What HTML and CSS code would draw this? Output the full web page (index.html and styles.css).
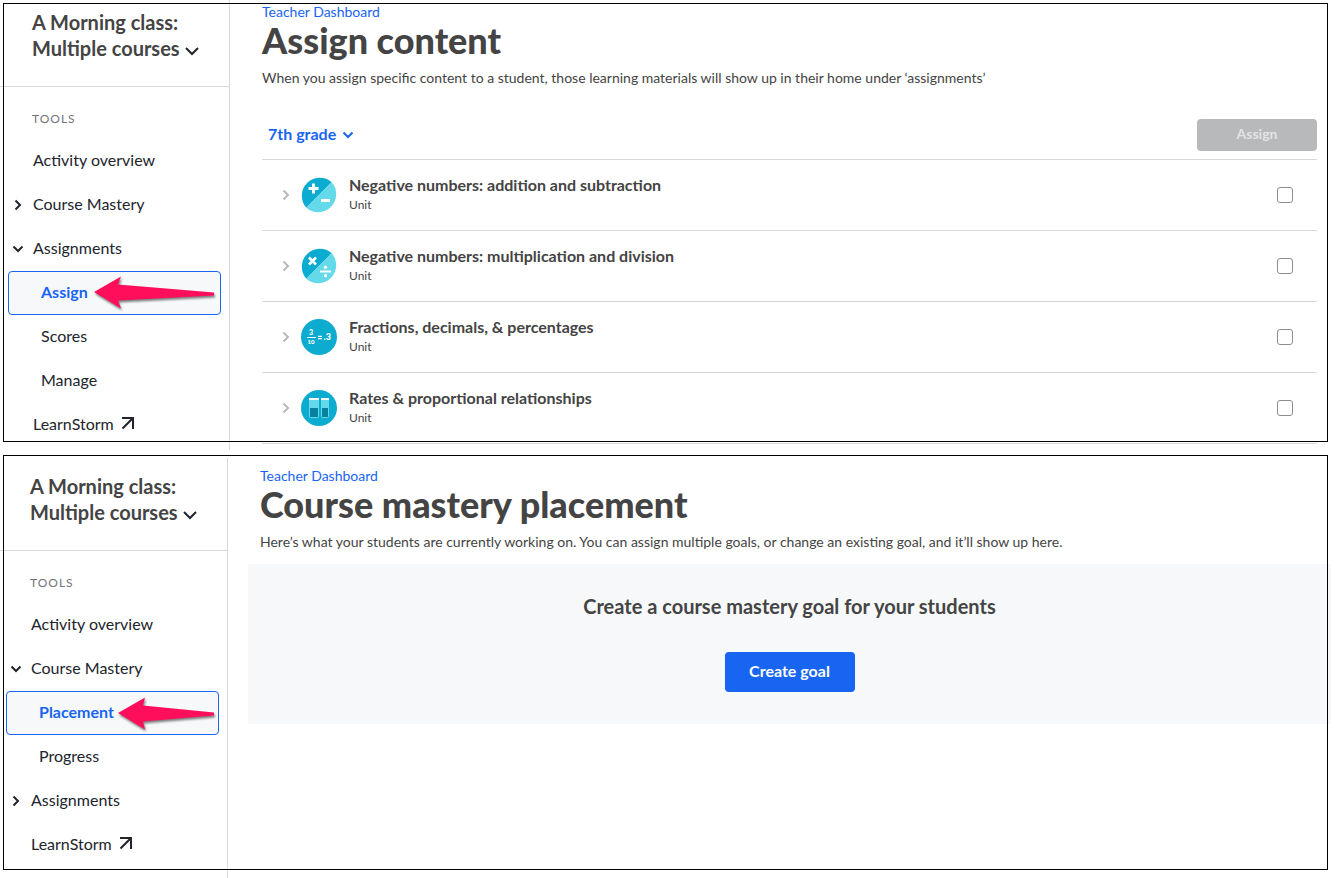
FILE: index.html
```html
<!DOCTYPE html>
<html lang="en">
<head>
  <meta charset="UTF-8" />
  <meta name="viewport" content="width=device-width, initial-scale=1" />
  <title>Teacher Dashboard</title>
  <link rel="stylesheet" href="styles.css">
</head>
<body>
  <!-- Assign content -->
  <section class="panel">
    <aside class="sidebar">
      <button class="class-switch" type="button">A Morning class:<br>Multiple courses
        <svg class="switch-icon" viewBox="0 0 16 10"><path d="M2 2l6 6 6-6" /></svg>
      </button>
      <nav class="tools">
        <h3>Tools</h3>
        <a class="nav-item" href="#"><span class="nav-icon"></span>Activity overview</a>
        <a class="nav-item" href="#"><span class="nav-icon"><svg viewBox="0 0 12 12"><path d="M3.500 1.500L8 6l-4.500 4.500" /></svg></span>Course Mastery</a>
        <a class="nav-item" href="#"><span class="nav-icon"><svg viewBox="0 0 12 12"><path d="M1.500 3.500L6 8l4.500-4.500" /></svg></span>Assignments</a>
        <a class="nav-item nested active" href="#">Assign
          <svg class="pointer" width="122" height="36" viewBox="0 0 122 36"><path d="M1 18L28 2.500l-3 8 96 8v3l-96 5 3 8z" /></svg>
        </a>
        <a class="nav-item nested" href="#">Scores</a>
        <a class="nav-item nested" href="#">Manage</a>
        <a class="nav-item" href="#"><span class="nav-icon"></span>LearnStorm
          <svg class="external" viewBox="0 0 14 14"><path d="M1 2h11v11M12 2L1.500 12.500" /></svg>
        </a>
      </nav>
    </aside>

    <main class="content">
      <a class="crumb" href="#">Teacher Dashboard</a>
      <h1>Assign content</h1>
      <p>When you assign specific content to a student, those learning materials will show up in their home under ‘assignments’</p>

      <div class="toolbar">
        <label class="grade">
          <select aria-label="Grade">
            <option>7th grade</option>
          </select>
          <svg viewBox="0 0 12 12"><path d="M1.500 3.500L6 8l4.500-4.500" /></svg>
        </label>
        <button class="assign-btn" type="button" disabled>Assign</button>
      </div>

      <ul class="units">
        <li class="unit">
          <svg class="expand" viewBox="0 0 12 12"><path d="M3.500 1.500L8 6l-4.500 4.500" /></svg>
          <svg class="unit-icon" viewBox="0 0 36 36">
            <path d="M5.300 30.700A18 18 0 0 1 30.700 5.300z" fill="#0cacd0" />
            <path d="M30.700 5.300A18 18 0 0 1 5.300 30.700z" fill="#63d9ea" />
            <path d="M12.500 6.500v10M7.500 11.500h10" stroke="#fff" stroke-width="3" />
            <path d="M20 23.500h9" stroke="#fff" stroke-width="3" />
          </svg>
          <label for="unit-1"><span class="unit-title">Negative numbers: addition and subtraction</span><span class="unit-kind">Unit</span></label>
          <input type="checkbox" id="unit-1" />
        </li>
        <li class="unit">
          <svg class="expand" viewBox="0 0 12 12"><path d="M3.500 1.500L8 6l-4.500 4.500" /></svg>
          <svg class="unit-icon" viewBox="0 0 36 36">
            <path d="M5.300 30.700A18 18 0 0 1 30.700 5.300z" fill="#0cacd0" />
            <path d="M30.700 5.300A18 18 0 0 1 5.300 30.700z" fill="#63d9ea" />
            <path d="M8 9.500l7 7M15 9.500l-7 7" stroke="#fff" stroke-width="2.500" />
            <path d="M19 23.500h11" stroke="#fff" stroke-width="2" />
            <circle cx="24.500" cy="19.300" r="1.700" fill="#fff" />
            <circle cx="24.500" cy="27.700" r="1.700" fill="#fff" />
          </svg>
          <label for="unit-2"><span class="unit-title">Negative numbers: multiplication and division</span><span class="unit-kind">Unit</span></label>
          <input type="checkbox" id="unit-2" />
        </li>
        <li class="unit">
          <svg class="expand" viewBox="0 0 12 12"><path d="M3.500 1.500L8 6l-4.500 4.500" /></svg>
          <svg class="unit-icon unit-icon-text" viewBox="0 0 36 36">
            <circle cx="18" cy="18" r="18" fill="#0cacd0" />
            <text x="10" y="16" font-size="7" text-anchor="middle">3</text>
            <path d="M6 18.500h9" stroke="#fff" />
            <text x="10" y="25" font-size="6" text-anchor="middle">10</text>
            <path d="M17 17.300h4M17 19.700h4" stroke="#fff" stroke-width="1.200" />
            <text x="22.500" y="21" font-size="9">.3</text>
          </svg>
          <label for="unit-3"><span class="unit-title">Fractions, decimals, &amp; percentages</span><span class="unit-kind">Unit</span></label>
          <input type="checkbox" id="unit-3" />
        </li>
        <li class="unit">
          <svg class="expand" viewBox="0 0 12 12"><path d="M3.500 1.500L8 6l-4.500 4.500" /></svg>
          <svg class="unit-icon" viewBox="0 0 36 36">
            <circle cx="18" cy="18" r="18" fill="#0cacd0" />
            <path d="M8 8h10v18a2 2 0 0 1-2 2h-6a2 2 0 0 1-2-2zM20 8h8v18a2 2 0 0 1-2 2h-4a2 2 0 0 1-2-2z" fill="#63d9ea" />
            <path d="M9 18h8v9h-8zM21 18h6v9h-6z" fill="#0682a0" />
            <path d="M8 9h10M20 9h8" stroke="#fff" stroke-width="2" />
          </svg>
          <label for="unit-4"><span class="unit-title">Rates &amp; proportional relationships</span><span class="unit-kind">Unit</span></label>
          <input type="checkbox" id="unit-4" />
        </li>
      </ul>
    </main>
  </section>

  <!-- Course mastery placement -->
  <section class="panel panel-placement">
    <aside class="sidebar">
      <button class="class-switch" type="button">A Morning class:<br>Multiple courses
        <svg class="switch-icon" viewBox="0 0 16 10"><path d="M2 2l6 6 6-6" /></svg>
      </button>
      <nav class="tools">
        <h3>Tools</h3>
        <a class="nav-item" href="#"><span class="nav-icon"></span>Activity overview</a>
        <a class="nav-item" href="#"><span class="nav-icon"><svg viewBox="0 0 12 12"><path d="M1.500 3.500L6 8l4.500-4.500" /></svg></span>Course Mastery</a>
        <a class="nav-item nested active" href="#">Placement
          <svg class="pointer" width="98" height="36" viewBox="0 0 98 36"><path d="M1 18L28 2.500l-2 8 71 7v3l-71 6 2 8z" /></svg>
        </a>
        <a class="nav-item nested" href="#">Progress</a>
        <a class="nav-item" href="#"><span class="nav-icon"><svg viewBox="0 0 12 12"><path d="M3.500 1.500L8 6l-4.500 4.500" /></svg></span>Assignments</a>
        <a class="nav-item" href="#"><span class="nav-icon"></span>LearnStorm
          <svg class="external" viewBox="0 0 14 14"><path d="M1 2h11v11M12 2L1.500 12.500" /></svg>
        </a>
      </nav>
    </aside>

    <main class="content">
      <a class="crumb" href="#">Teacher Dashboard</a>
      <h1>Course mastery placement</h1>
      <p>Here’s what your students are currently working on. You can assign multiple goals, or change an existing goal, and it’ll show up here.</p>

      <div class="goal-box">
        <h2>Create a course mastery goal for your students</h2>
        <button class="goal-btn" type="button">Create goal</button>
      </div>
    </main>
  </section>
</body>
</html>
```
FILE: styles.css
```css
* {
  box-sizing: border-box;
  margin: 0;
  padding: 0;
}

body {
  display: flex;
  flex-direction: column;
  gap: 8px;
  background: #fff;
  color: #444;
  font-family: Lato, sans-serif;
}

button,
select {
  font-family: inherit;
  border: none;
  background: none;
}

a {
  text-decoration: none;
}

svg {
  flex: none;
  fill: none;
}

.panel {
  --top: 0px;
  --left: 8px;
  position: relative;
  display: flex;
}

.panel-placement {
  --top: 6px;
  --left: 6px;
}

/* black frame drawn over each panel */
.panel::after {
  content: "";
  position: absolute;
  inset: 3px 8px 8px 3px;
  border: 1px solid #000;
  pointer-events: none;
}

.panel-placement::after {
  top: -3px;
}

/* Sidebar */
.sidebar {
  flex: none;
  width: calc(222px + var(--left));
  padding-top: var(--top);
  padding-bottom: 3px;
  border-right: 1px solid #d6d8da;
}

.panel-placement .sidebar {
  padding-bottom: 11px;
}

.class-switch {
  display: block;
  width: 100%;
  padding: 9px 0 25px calc(24px + var(--left));
  border-bottom: 1px solid #d6d8da;
  color: #444;
  font-size: 20px;
  font-weight: bold;
  line-height: 26px;
  text-align: left;
  white-space: nowrap;
  cursor: pointer;
}

.switch-icon {
  width: 16px;
  height: 10px;
  stroke: #21242c;
  stroke-width: 2;
}

.tools {
  padding: 0 8px 0 var(--left);
}

.tools h3 {
  padding: 24px 0 12px 24px;
  color: #71747a;
  font-size: 12px;
  font-weight: normal;
  line-height: 16px;
  letter-spacing: 1px;
  text-transform: uppercase;
}

.nav-item {
  position: relative;
  display: flex;
  align-items: center;
  height: 44px;
  padding-bottom: 4px;
  border: 1px solid transparent;
  border-radius: 4px;
  color: #21242c;
  font-size: 16px;
}

.nav-item.nested {
  padding-left: 32px;
}

.nav-item.active {
  border-color: #1865f2;
  background: #f7f8fa;
  color: #1865f2;
  font-weight: bold;
}

.nav-icon {
  display: flex;
  width: 24px;
  padding-top: 4px;
  padding-left: 3px;
}

.nav-icon svg {
  width: 12px;
  height: 12px;
  stroke: #21242c;
  stroke-width: 2;
}

.external {
  width: 14px;
  height: 14px;
  margin-left: 7px;
  stroke: #21242c;
  stroke-width: 2;
}

.pointer {
  position: absolute;
  top: 2px;
  right: 5px;
  fill: #ff0f5b;
  filter: drop-shadow(1px 2px 1px rgba(0, 0, 0, 0.5));
  overflow: visible;
}

.panel-placement .pointer {
  top: 3px;
  right: 3px;
}

/* Main column */
.content {
  flex: 1;
  min-width: 0;
  padding: calc(3px + var(--top)) 19px 0 32px;
}

.crumb {
  display: block;
  color: #1865f2;
  font-size: 14px;
  line-height: 18px;
}

h1 {
  font-size: 36px;
  font-weight: 900;
  line-height: 38px;
}

.content p {
  margin-top: 9px;
  font-size: 14px;
  line-height: 20px;
}

.toolbar {
  display: flex;
  align-items: center;
  justify-content: space-between;
  margin-top: 31px;
  padding-bottom: 8px;
  border-bottom: 1px solid #d6d8da;
}

.grade {
  display: flex;
  align-items: center;
  gap: 5px;
  padding-left: 6px;
}

.grade select {
  appearance: none;
  padding-bottom: 3px;
  color: #1865f2;
  font-size: 16px;
  font-weight: bold;
}

.grade svg {
  width: 12px;
  height: 12px;
  stroke: #1865f2;
  stroke-width: 2;
}

.assign-btn {
  width: 120px;
  height: 32px;
  padding-bottom: 3px;
  border-radius: 4px;
  background: #b8b9bb;
  color: #e3e4e5;
  font-size: 14px;
  font-weight: bold;
}

.units {
  list-style: none;
}

.unit {
  display: flex;
  align-items: center;
  height: 71px;
  padding: 0 24px 0 18px;
  border-bottom: 1px solid #d6d8da;
}

.expand {
  width: 12px;
  height: 12px;
  margin-right: 9px;
  stroke: #b8b9bb;
  stroke-width: 2;
}

.unit-icon {
  width: 36px;
  height: 36px;
  margin-right: 12px;
}

.unit-icon-text text {
  fill: #fff;
  font-weight: 900;
}

.unit label {
  flex: 1;
}

.unit-title,
.unit-kind {
  display: block;
  line-height: 20px;
}

.unit-title {
  font-size: 16px;
  font-weight: bold;
}

.unit-kind {
  font-size: 12px;
}

.unit input {
  appearance: none;
  width: 16px;
  height: 16px;
  border: 1px solid #8b8d92;
  border-radius: 3px;
}

/* Goal banner */
.goal-box {
  margin: 12px -14px 0 -12px;
  padding: 30px 0 32px;
  background: #f7f8fa;
  text-align: center;
}

.goal-box h2 {
  margin-bottom: 34px;
  font-size: 20px;
  line-height: 24px;
}

.goal-btn {
  width: 130px;
  height: 40px;
  padding-bottom: 3px;
  border-radius: 4px;
  background: #1865f2;
  color: #fff;
  font-size: 16px;
  font-weight: bold;
}
```
